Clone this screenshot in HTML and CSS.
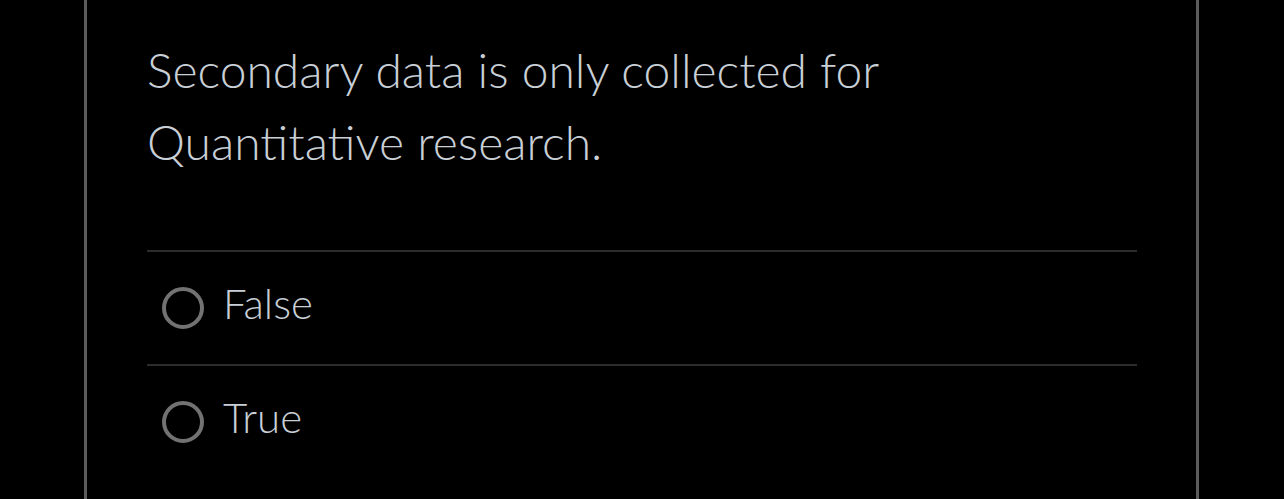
FILE: index.html
```html
<!DOCTYPE html>
<html lang="en">
<head>
<meta charset="utf-8">
<title>Question</title>
<link rel="stylesheet" href="styles.css">
</head>
<body>
<div class="card">
  <div class="question">Secondary data is only collected for Quantitative research.</div>
  <div class="answers">
    <label class="answer"><span class="radio"></span><span class="label">False</span></label>
    <label class="answer"><span class="radio"></span><span class="label">True</span></label>
  </div>
</div>
</body>
</html>
```
FILE: styles.css
```css
html, body {
  margin: 0;
  padding: 0;
  background: #000;
  height: 100%;
  overflow: hidden;
}
body {
  font-family: Lato, "Open Sans", sans-serif;
  color: #c8cfd6;
}
.card {
  margin-left: 84px;
  width: 1115px;
  height: 499px;
  box-sizing: border-box;
  border-left: 3px solid #5c5c5c;
  border-right: 3px solid #5c5c5c;
  padding: 34px 59px 0 60px;
}
.question {
  font-weight: 300;
  font-size: 48px;
  line-height: 72px;
  width: 780px;
}
.answers {
  margin-top: 72px;
}
.answer {
  display: flex;
  align-items: center;
  height: 112px;
  border-top: 2px solid #2b2b2b;
}
.radio {
  width: 42px;
  height: 42px;
  box-sizing: border-box;
  border: 4px solid #727272;
  border-radius: 50%;
  margin-left: 15px;
  margin-right: 19px;
  flex: none;
}
.label {
  font-weight: 300;
  font-size: 42px;
  line-height: 50px;
  margin-top: -10px;
}
```
